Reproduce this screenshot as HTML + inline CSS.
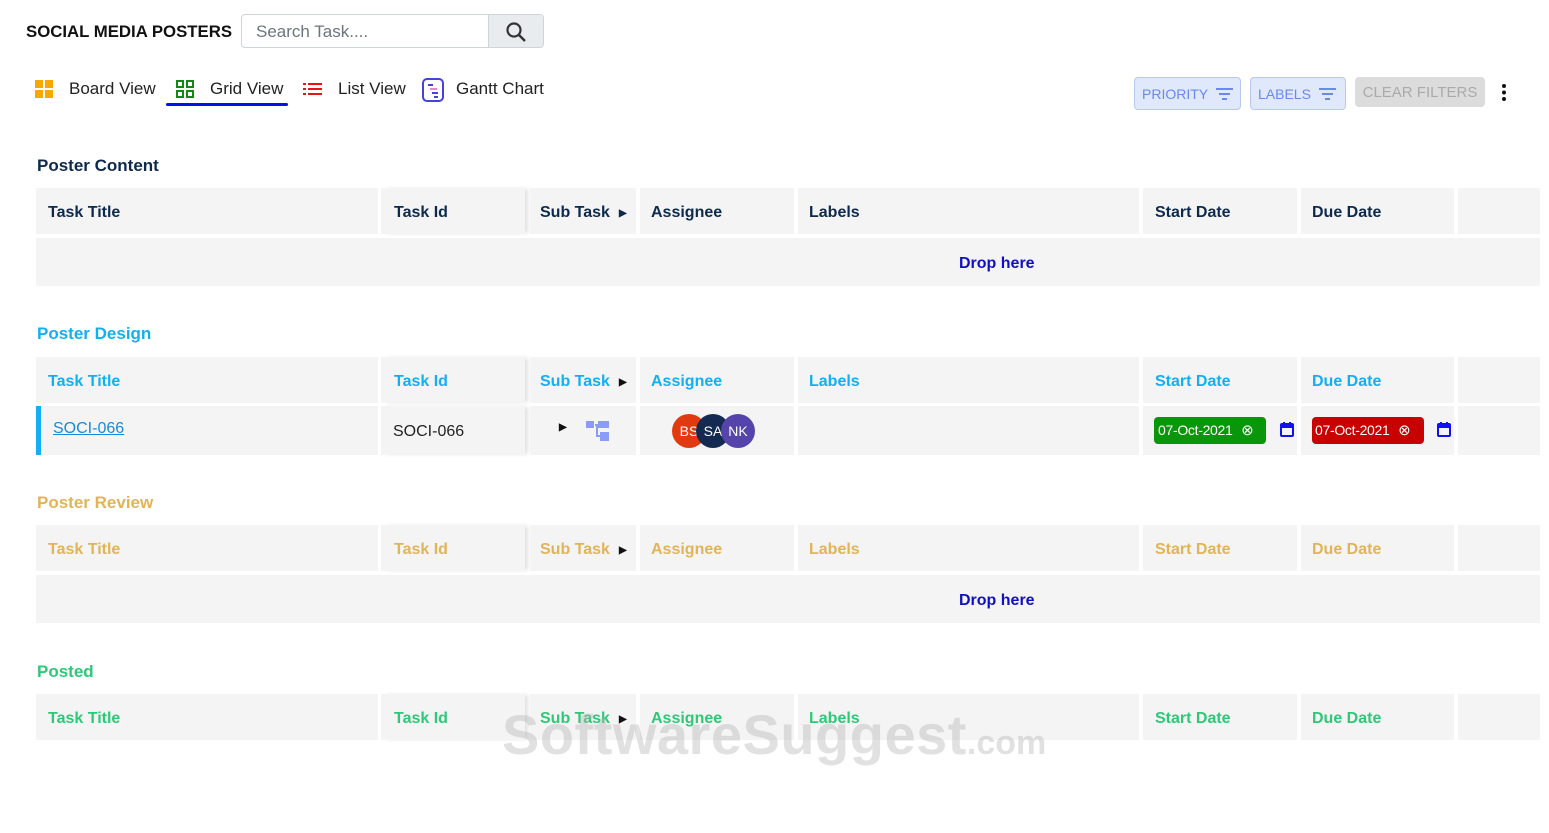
<!DOCTYPE html>
<html><head><meta charset="utf-8"><style>
*{margin:0;padding:0;box-sizing:border-box}
body{width:1549px;height:833px;background:#fff;font-family:"Liberation Sans",Arial,sans-serif;position:relative;overflow:hidden}
.a{position:absolute}
.c{position:absolute;background:#f4f4f4;display:flex;align-items:center;font-weight:bold;font-size:16px;padding-top:4px}
.sh{box-shadow:4px 0 4px -1px rgba(0,0,0,.12)}
.t{position:absolute;left:37px;font-weight:bold;font-size:17px}
.btn{position:absolute;top:77px;height:33px;border:1px solid #b8c8f0;background:#e0e8fc;border-radius:4px;color:#6a88f0;font-size:14px;display:flex;align-items:center;padding-left:7px}
.dr{justify-content:flex-start;padding-left:923px;color:#1010c0}
</style></head><body>
<div class="a" style="left:26px;top:22px;font-weight:bold;font-size:16.8px;color:#111">SOCIAL MEDIA POSTERS</div>
<div class="a" style="left:241px;top:14px;width:303px;height:34px;border:1px solid #ced4da;border-radius:4px;overflow:hidden">
<div class="a" style="left:14px;top:7px;font-size:17px;color:#6c757d">Search Task....</div>
<div class="a" style="left:246px;top:0;width:56px;height:32px;background:#e9ecef;border-left:1px solid #ced4da">
<svg class="a" style="left:16px;top:6px" width="22" height="22" viewBox="0 0 22 22"><circle cx="9" cy="9" r="6.5" fill="none" stroke="#333" stroke-width="2.2"/><line x1="14" y1="14" x2="20" y2="20" stroke="#333" stroke-width="2.5"/></svg></div></div>
<svg class="a" style="left:35px;top:80px" width="19" height="19"><rect x="0" y="0" width="8" height="8" fill="#f9a800"/><rect x="10" y="0" width="8" height="8" fill="#f9a800"/><rect x="0" y="10" width="8" height="8" fill="#f9a800"/><rect x="10" y="10" width="8" height="8" fill="#f9a800"/></svg>
<div class="a" style="left:69px;top:79px;font-size:17px;color:#222">Board View</div>
<svg class="a" style="left:176px;top:80px" width="19" height="19" fill="none" stroke="#108a10" stroke-width="2"><rect x="1" y="1" width="6" height="6"/><rect x="11" y="1" width="6" height="6"/><rect x="1" y="11" width="6" height="6"/><rect x="11" y="11" width="6" height="6"/></svg>
<div class="a" style="left:210px;top:79px;font-size:17px;color:#222">Grid View</div>
<div class="a" style="left:166px;top:103px;width:122px;height:3px;background:#0010f0;border-radius:2px"></div>
<svg class="a" style="left:303px;top:82px" width="20" height="14" fill="#f01010"><rect x="0" y="1" width="3" height="2"/><rect x="5" y="1" width="14" height="2"/><rect x="0" y="6" width="3" height="2"/><rect x="5" y="6" width="14" height="2"/><rect x="0" y="11" width="3" height="2"/><rect x="5" y="11" width="14" height="2"/></svg>
<div class="a" style="left:338px;top:79px;font-size:17px;color:#222">List View</div>
<svg class="a" style="left:422px;top:78px" width="22" height="24"><rect x="1" y="1" width="20" height="22" rx="4" fill="#fff" stroke="#4444dd" stroke-width="2"/><rect x="6" y="6" width="5" height="2" fill="#4444dd"/><rect x="8" y="10" width="7" height="2" fill="#f080d0"/><rect x="10" y="14" width="6" height="2" fill="#4444dd"/><rect x="12" y="18" width="4" height="2" fill="#4444dd"/></svg>
<div class="a" style="left:456px;top:79px;font-size:17px;color:#222">Gantt Chart</div>
<div class="btn" style="left:1134px;width:107px">PRIORITY<svg style="margin-left:8px" width="18" height="14" fill="#6a88f0"><rect x="0" y="1" width="17" height="2"/><rect x="3" y="6" width="11" height="2"/><rect x="6" y="11" width="5" height="2"/></svg></div>
<div class="btn" style="left:1250px;width:96px">LABELS<svg style="margin-left:8px" width="18" height="14" fill="#6a88f0"><rect x="0" y="1" width="17" height="2"/><rect x="3" y="6" width="11" height="2"/><rect x="6" y="11" width="5" height="2"/></svg></div>
<div class="a" style="left:1355px;top:77px;width:130px;height:30px;background:#dcdcdc;border-radius:4px;color:#aaa;font-size:15px;display:flex;align-items:center;justify-content:center">CLEAR FILTERS</div>
<svg class="a" style="left:1500px;top:83px" width="8" height="20" fill="#111"><circle cx="4" cy="3" r="2"/><circle cx="4" cy="9.5" r="2"/><circle cx="4" cy="16" r="2"/></svg>

<div class="t" style="top:156px;color:#0d2a4e">Poster Content</div>
<div class="a" style="left:0;top:188px;color:#0d2a4e">
<div class="c" style="left:36px;width:342px;height:46px;padding-left:12px">Task Title</div><div class="c sh" style="left:381px;width:144px;height:46px;padding-left:13px">Task Id</div><div class="c" style="left:530px;width:106px;height:46px;padding-left:10px">Sub Task<span style="font-size:10px;margin-left:9px">▶</span></div><div class="c" style="left:640px;width:154px;height:46px;padding-left:11px">Assignee</div><div class="c" style="left:798px;width:341px;height:46px;padding-left:11px">Labels</div><div class="c" style="left:1143px;width:154px;height:46px;padding-left:12px">Start Date</div><div class="c" style="left:1301px;width:153px;height:46px;padding-left:11px">Due Date</div><div class="c" style="left:1458px;width:82px;height:46px"></div></div>
<div class="c dr" style="left:36px;top:238px;width:1504px;height:48px">Drop here</div>

<div class="t" style="top:324px;color:#12b0f2">Poster Design</div>
<div class="a" style="left:0;top:357px;color:#12b0f2">
<div class="c" style="left:36px;width:342px;height:46px;padding-left:12px">Task Title</div><div class="c sh" style="left:381px;width:144px;height:46px;padding-left:13px">Task Id</div><div class="c" style="left:530px;width:106px;height:46px;padding-left:10px">Sub Task<span style="font-size:10px;margin-left:9px;color:#111">▶</span></div><div class="c" style="left:640px;width:154px;height:46px;padding-left:11px">Assignee</div><div class="c" style="left:798px;width:341px;height:46px;padding-left:11px">Labels</div><div class="c" style="left:1143px;width:154px;height:46px;padding-left:12px">Start Date</div><div class="c" style="left:1301px;width:153px;height:46px;padding-left:11px">Due Date</div><div class="c" style="left:1458px;width:82px;height:46px"></div></div>
<div class="a" style="left:0;top:406px;font-weight:normal">
<div class="c" style="left:36px;width:342px;height:49px;border-left:5px solid #12b0f2;padding-left:12px;padding-top:0;padding-bottom:3px;font-weight:normal"><span style="color:#1a8ad8;text-decoration:underline">SOCI-066</span></div>
<div class="c sh" style="left:381px;width:144px;height:49px;padding-left:12px;padding-top:2px;font-weight:normal;color:#222">SOCI-066</div>
<div class="c" style="left:530px;width:106px;height:49px"><span class="a" style="left:29px;top:16px;font-size:10px;color:#111">▶</span>
<svg class="a" style="left:56px;top:13px" width="24" height="23" fill="#8a9cf8"><rect x="0" y="2" width="8" height="7"/><rect x="12" y="2" width="11" height="7"/><rect x="14" y="13" width="9" height="9"/><rect x="9" y="5" width="3" height="2"/><rect x="10" y="5" width="2" height="13"/><rect x="10" y="16" width="4" height="2"/></svg></div>
<div class="c" style="left:640px;width:154px;height:49px;font-weight:normal;font-size:14px;color:#fff">
<div class="a" style="left:32px;top:8px;width:34px;height:34px;border-radius:50%;background:#e23a10;display:flex;align-items:center;justify-content:center">BS</div>
<div class="a" style="left:56px;top:8px;width:34px;height:34px;border-radius:50%;background:#142a50;display:flex;align-items:center;justify-content:center">SA</div>
<div class="a" style="left:81px;top:8px;width:34px;height:34px;border-radius:50%;background:#5544aa;display:flex;align-items:center;justify-content:center">NK</div></div>
<div class="c" style="left:798px;width:341px;height:49px"></div>
<div class="c" style="left:1143px;width:154px;height:49px;font-weight:normal">
<div class="a" style="left:11px;top:11px;width:112px;height:27px;background:#0a960a;border-radius:4px;color:#fff;font-size:14px;padding:5px 0 0 4px;letter-spacing:-0.3px">07-Oct-2021 <span style="margin-left:5px;font-size:15px;line-height:14px">⊗</span></div>
<svg class="a" style="left:137px;top:16px" width="14" height="15"><rect x="1" y="2" width="12" height="12" rx="1" fill="none" stroke="#1010f0" stroke-width="2"/><rect x="1" y="2" width="12" height="4" fill="#1010f0"/><rect x="3" y="0" width="2" height="3" fill="#1010f0"/><rect x="9" y="0" width="2" height="3" fill="#1010f0"/></svg></div>
<div class="c" style="left:1301px;width:153px;height:49px;font-weight:normal">
<div class="a" style="left:11px;top:11px;width:112px;height:27px;background:#c80000;border-radius:4px;color:#fff;font-size:14px;padding:5px 0 0 3px;letter-spacing:-0.3px">07-Oct-2021 <span style="margin-left:5px;font-size:15px;line-height:14px">⊗</span></div>
<svg class="a" style="left:136px;top:16px" width="14" height="15"><rect x="1" y="2" width="12" height="12" rx="1" fill="none" stroke="#1010f0" stroke-width="2"/><rect x="1" y="2" width="12" height="4" fill="#1010f0"/><rect x="3" y="0" width="2" height="3" fill="#1010f0"/><rect x="9" y="0" width="2" height="3" fill="#1010f0"/></svg></div>
<div class="c" style="left:1458px;width:82px;height:49px"></div></div>

<div class="t" style="top:493px;color:#e2b458">Poster Review</div>
<div class="a" style="left:0;top:525px;color:#e2b458">
<div class="c" style="left:36px;width:342px;height:46px;padding-left:12px">Task Title</div><div class="c sh" style="left:381px;width:144px;height:46px;padding-left:13px">Task Id</div><div class="c" style="left:530px;width:106px;height:46px;padding-left:10px">Sub Task<span style="font-size:10px;margin-left:9px;color:#111">▶</span></div><div class="c" style="left:640px;width:154px;height:46px;padding-left:11px">Assignee</div><div class="c" style="left:798px;width:341px;height:46px;padding-left:11px">Labels</div><div class="c" style="left:1143px;width:154px;height:46px;padding-left:12px">Start Date</div><div class="c" style="left:1301px;width:153px;height:46px;padding-left:11px">Due Date</div><div class="c" style="left:1458px;width:82px;height:46px"></div></div>
<div class="c dr" style="left:36px;top:575px;width:1504px;height:48px">Drop here</div>

<div class="t" style="top:662px;color:#2ec878">Posted</div>
<div class="a" style="left:0;top:694px;color:#2ec878">
<div class="c" style="left:36px;width:342px;height:46px;padding-left:12px">Task Title</div><div class="c sh" style="left:381px;width:144px;height:46px;padding-left:13px">Task Id</div><div class="c" style="left:530px;width:106px;height:46px;padding-left:10px">Sub Task<span style="font-size:10px;margin-left:9px;color:#111">▶</span></div><div class="c" style="left:640px;width:154px;height:46px;padding-left:11px">Assignee</div><div class="c" style="left:798px;width:341px;height:46px;padding-left:11px">Labels</div><div class="c" style="left:1143px;width:154px;height:46px;padding-left:12px">Start Date</div><div class="c" style="left:1301px;width:153px;height:46px;padding-left:11px">Due Date</div><div class="c" style="left:1458px;width:82px;height:46px"></div></div>

<div class="a" style="left:502px;top:702px;font-size:56px;font-weight:bold;color:rgba(180,180,180,.4);letter-spacing:0.5px;white-space:nowrap">SoftwareSuggest<span style="font-size:34px;letter-spacing:0">.com</span></div>
</body></html>
